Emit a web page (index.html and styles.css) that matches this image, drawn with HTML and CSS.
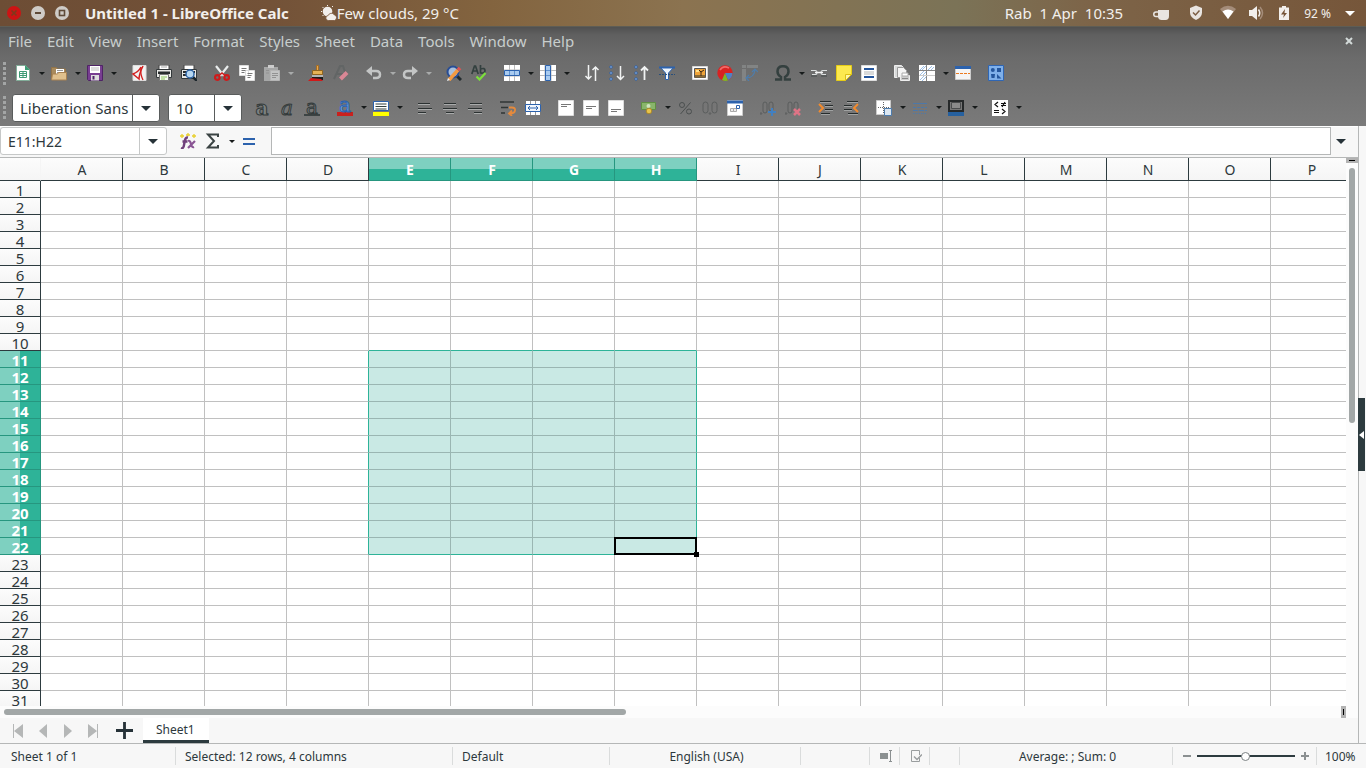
FILE: index.html
```html
<!DOCTYPE html>
<html lang="en">
<head>
  <meta charset="UTF-8" />
  <title>Untitled 1 - LibreOffice Calc</title>
  <link rel="stylesheet" href="styles.css">
</head>
<body>
  <header class="topbar">
    <div class="window-buttons">
      <button class="win-btn close" aria-label="Close"><svg viewBox="0 0 14 14"><path d="M4.5 4.5l5 5M9.5 4.5l-5 5" stroke="#7d3a1c" stroke-width="1.6"/></svg></button>
      <button class="win-btn" aria-label="Minimize"><svg viewBox="0 0 14 14"><path d="M4 7h6" stroke="#5f4a38" stroke-width="2"/></svg></button>
      <button class="win-btn" aria-label="Restore"><svg viewBox="0 0 14 14"><rect x="4.5" y="4.5" width="5" height="5" fill="none" stroke="#5f4a38" stroke-width="1.6"/></svg></button>
    </div>
    <h1 class="title">Untitled 1 - LibreOffice Calc</h1>
    <div class="weather">
      <svg class="icon" viewBox="0 0 16 16" fill="#f2efec"><circle cx="6.500" cy="6.500" r="4.800"/><path d="M6.500 0v1M1.500 2l1 1M11 2l1-1M0 6.500h1M1.500 11l1-1" stroke="#f2efec"/><path d="M7.500 15.500a2.500 2.500 0 0 1-.3-5 3.400 3.400 0 0 1 6-.8 3 3 0 0 1 .3 5.800z" stroke="#775439" stroke-width=".8"/></svg>
      <span>Few clouds, 29 °C</span>
    </div>
    <div class="tray">
      <span class="clock">Rab  1 Apr  10:35</span>
      <svg class="icon tray-cup" viewBox="0 0 16 16" fill="#e9e5e1"><path d="M5 5h11v6q0 4-3.500 4h-4Q5.500 15 5 12z"/><path d="M5.500 7H3a2 2 0 0 0 0 4.500h3" fill="none" stroke="#e9e5e1" stroke-width="1.500"/></svg>
      <svg class="icon tray-shield" viewBox="0 0 16 16" fill="#e9e5e1"><path d="M8 .5l6 2.500v4.500q0 4.500-6 7.500-6-3-6-7.500V3z"/><path d="M5 7.500l2.500 2.500 4-4.500" fill="none" stroke="#7d5f45" stroke-width="1.500"/></svg>
      <svg class="icon" viewBox="0 0 16 16"><path d="M0 4q8-6.500 16 0L8 14z" fill="#a48c79"/><path d="M2.500 6.500q5.500-4 11 0L8 14z" fill="#fff"/></svg>
      <svg class="icon" viewBox="0 0 16 16" fill="#f2efec"><path d="M1 5h3l5-4v14l-5-4H1z"/><path d="M10.500 4.500q2.500 3.500 0 7" fill="none" stroke="#f2efec" stroke-width="1.500"/><path d="M12 2q5 6 0 12" fill="none" stroke="#a48c79" stroke-width="1.500"/></svg>
      <svg class="icon" viewBox="0 0 16 16" fill="#f2efec"><path d="M6 1h4v1.500h3V15H3V2.500h3z"/><path d="M9 4L5 9.500h3L7 13l4-5H8.500z" fill="#765438"/></svg>
      <span class="percent">92 %</span>
      <span class="tray-arrow"></span>
    </div>
  </header>

  <div class="chrome">
    <nav class="menubar">
      <a href="#">File</a>
      <a href="#">Edit</a>
      <a href="#">View</a>
      <a href="#">Insert</a>
      <a href="#">Format</a>
      <a href="#">Styles</a>
      <a href="#">Sheet</a>
      <a href="#">Data</a>
      <a href="#">Tools</a>
      <a href="#">Window</a>
      <a href="#">Help</a>
      <button class="doc-close" aria-label="Close document"><svg viewBox="0 0 8 8"><path d="M1 1l6 6M7 1L1 7" stroke="#d3dad9" stroke-width="2"/></svg></button>
    </nav>

    <!-- Standard toolbar -->
    <div class="toolbar">
      <span class="grip"></span>
      <button class="tool" aria-label="New"><svg viewBox="0 0 16 16"><path d="M1.500.5h9l4 4v11h-13z" fill="#fff" stroke="#82ad99"/><path d="M10 0l5 5h-5z" fill="#3f9b75"/><path d="M4.500 6.500h7v6h-7zM4.500 8.500h7M4.500 10.500h7M8 6.500v6" fill="none" stroke="#3f9b75"/></svg></button>
      <button class="drop" aria-label="New options"></button>
      <button class="tool" aria-label="Open"><svg viewBox="0 0 16 16"><path d="M.5 14V2.500h5l1 1.500h8v10z" fill="#a98a5c" stroke="#927449"/><path d="M5 4h8v6H5z" fill="#fff"/><path d="M6 5.500h6M6 7.500h6" stroke="#999"/><path d="M.5 15l1-6h5l1-1.500h8v7.500z" fill="#e0c08d" stroke="#a98252"/></svg></button>
      <button class="drop" aria-label="Open options"></button>
      <button class="tool" aria-label="Save"><svg viewBox="0 0 16 16"><path d="M.5.5h15v15H1.500l-1-1z" fill="#783e91" stroke="#4f2466"/><path d="M3 1h10v7H3z" fill="#fff"/><path d="M4 3h8M4 5h8" stroke="#bbb"/><path d="M4 10h8v5.500H4z" fill="#ddd"/><path d="M5.500 11h2v3.500h-2z" fill="#4f2466"/></svg></button>
      <button class="drop" aria-label="Save options"></button>
      <span class="sep"></span>
      <button class="tool" aria-label="Export as PDF"><svg viewBox="0 0 16 16"><path d="M2 .5h13v15H2z" fill="#f2f2f2" stroke="#ddd"/><path d="M10 2Q7.500 7 2 9l6 5Q8 9 12 1" fill="none" stroke="#d31f1f" stroke-width="1.500"/><path d="M10 3q-1 6 2 12" fill="none" stroke="#d31f1f" stroke-width="1.300"/></svg></button>
      <button class="tool" aria-label="Print"><svg viewBox="0 0 16 16"><path d="M3 0h10v5H3z" fill="#fff" stroke="#444"/><path d="M.5 4.500h15v8H.5z" fill="#e9e9e6" stroke="#33383a"/><path d="M2 6.500h12v2.500H2z" fill="#272b2c"/><path d="M3.500 9.500h9v6h-9z" fill="#f5faef" stroke="#777"/><path d="M5 12h6M5 14h4" stroke="#8bc45d"/><path d="M5 2h6" stroke="#aaa"/></svg></button>
      <button class="tool" aria-label="Print preview"><svg viewBox="0 0 16 16"><path d="M3 0h10v5H3z" fill="#fff" stroke="#444"/><path d="M.5 4.500h15v9H.5z" fill="#e9e9e6" stroke="#33383a"/><path d="M2 6h12v2H2zM2 9h3v2H2z" fill="#272b2c"/><path d="M12 12l4 4" stroke="#1a252b" stroke-width="2.500"/><circle cx="9" cy="9" r="4" fill="#b7d8f2" stroke="#2e64a5" stroke-width="1.500"/></svg></button>
      <span class="sep"></span>
      <button class="tool" aria-label="Cut"><svg viewBox="0 0 16 16"><path d="M2 1l8 10M14 1L6 11" stroke="#e9ecec" stroke-width="2.200"/><g fill="none" stroke="#cf1b1b" stroke-width="2.200"><circle cx="3.300" cy="12.500" r="2.300"/><circle cx="12.700" cy="12.500" r="2.300"/></g><path d="M5 10.500l3-2.500 3 2.500" fill="none" stroke="#cf1b1b" stroke-width="1.500"/></svg></button>
      <button class="tool" aria-label="Copy"><svg viewBox="0 0 16 16"><path d="M.5.5h9v10h-9zM6.500 5.500h9v10h-9z" fill="#fff" stroke="#ddd"/><path d="M2.500 3.500h5M2.500 5.500h4M2.500 7.500h3M8.500 8.500h5M8.500 10.500h4M8.500 12.500h3" stroke="#777"/></svg></button>
      <button class="tool" aria-label="Paste"><svg viewBox="0 0 16 16"><path d="M0 2h14v14H0z" fill="#a6a7a7"/><path d="M4 0h6v3H4z" fill="#ccc"/><path d="M6.500 5.500h9v10h-9z" fill="#c4c5c5" stroke="#b5b5b5"/><path d="M8 8.500h6M8 10.500h6M8 12.500h4M2 5.500h3M2 8h3" stroke="#929292"/></svg></button>
      <button class="drop off" aria-label="Paste options"></button>
      <span class="sep"></span>
      <button class="tool" aria-label="Clone formatting"><svg viewBox="0 0 16 16"><path d="M8.500.5h2V6h-2z" fill="#e9a94d" stroke="#a56c22"/><path d="M4.500 5.500h10v4h-10z" fill="#e6b256" stroke="#92661f"/><path d="M4 10h11v5H4z" fill="#1c1c1c"/><path d="M4 11h11" stroke="#e8e8e8" stroke-width="1.500"/><path d="M0 16l3-3 10 1 2 2z" fill="#d11919"/></svg></button>
      <button class="tool" aria-label="Clear formatting"><svg viewBox="0 0 16 16"><path d="M1 14L7 1h3l3 9M4 9h6" fill="none" stroke="#626565" stroke-width="2"/><path d="M7.500 14l6.500-6.500" stroke="#d98795" stroke-width="4"/></svg></button>
      <span class="sep"></span>
      <button class="tool" aria-label="Undo"><svg viewBox="0 0 16 16"><path d="M3 6h7q4 0 4 3.500T10 13H7" fill="none" stroke="#c3c5c5" stroke-width="2.500"/><path d="M0 6l6-5v10z" fill="#c3c5c5"/></svg></button>
      <button class="drop off" aria-label="Undo steps"></button>
      <button class="tool" aria-label="Redo"><svg viewBox="0 0 16 16"><path d="M13 6H6Q2 6 2 9.500T6 13h3" fill="none" stroke="#c3c5c5" stroke-width="2.500"/><path d="M16 6l-6-5v10z" fill="#c3c5c5"/></svg></button>
      <button class="drop off" aria-label="Redo steps"></button>
      <span class="sep"></span>
      <button class="tool" aria-label="Find and replace"><svg viewBox="0 0 16 16"><path d="M10 10l5 5" stroke="#222b2e" stroke-width="3"/><circle cx="7" cy="7" r="5.500" fill="#a9bfdc" stroke="#284d95" stroke-width="2"/><path d="M3 15l9-10" stroke="#f39a42" stroke-width="3.500"/><path d="M12 5l2-2" stroke="#e35454" stroke-width="3.500"/><path d="M1 16l1-3 2 2z" fill="#eee"/></svg></button>
      <button class="tool" aria-label="Spelling"><svg viewBox="0 0 16 16"><path d="M.8 9L3.500 1h1L7.200 9M2 6h4" fill="none" stroke="#33403f" stroke-width="1.700"/><path d="M9.500 0v8.500M9.500 4q4.500-1.500 4.500 1.500t-4.500 2.500" fill="none" stroke="#33403f" stroke-width="1.700"/><path d="M5.500 11.500l3 3 6-6.500" fill="none" stroke="#7ce03b" stroke-width="2.200"/></svg></button>
      <span class="sep"></span>
      <button class="tool" aria-label="Row"><svg viewBox="0 0 16 16"><path d="M0 0h16v16H0z" fill="#fff"/><path d="M5.500 0v16M10.500 0v16M0 5h16M0 11h16" stroke="#bbb"/><path d="M.5 5.500h15v5H.5z" fill="#a9cbf0" stroke="#2c62ad"/><path d="M5.500 6v4M10.500 6v4" stroke="#5f92d0"/></svg></button>
      <button class="drop" aria-label="Row options"></button>
      <button class="tool" aria-label="Column"><svg viewBox="0 0 16 16"><path d="M0 0h16v16H0z" fill="#fff"/><path d="M0 5.500h16M0 10.500h16M5 0v16M11 0v16" stroke="#bbb"/><path d="M5.500.5h5v15h-5z" fill="#a9cbf0" stroke="#2c62ad"/><path d="M6 5.500h4M6 10.500h4" stroke="#5f92d0"/></svg></button>
      <button class="drop" aria-label="Column options"></button>
      <span class="sep"></span>
      <button class="tool" aria-label="Sort"><svg viewBox="0 0 16 16" fill="none" stroke="#f1f3f3" stroke-width="1.500"><path d="M4.500 0v14M1.500 11l3 3 3-3M11.500 16V2M8.500 5l3-3 3 3"/></svg></button>
      <button class="tool" aria-label="Sort ascending"><svg viewBox="0 0 16 16"><path d="M11.500 1v13M8 11l3.500 3.500L15 11" fill="none" stroke="#f1f3f3" stroke-width="1.500"/><path d="M1 1h2v2H1zM1 7h2v2H1zM1 13h2v2H1z" fill="#fff" stroke="#2c62ad"/></svg></button>
      <button class="tool" aria-label="Sort descending"><svg viewBox="0 0 16 16"><path d="M10.500 15V2M7 5.500L10.500 2 14 5.500" fill="none" stroke="#f1f3f3" stroke-width="1.800"/><path d="M1 1h2v2H1zM1 7h2v2H1zM1 13h2v2H1z" fill="#fff" stroke="#2c62ad"/></svg></button>
      <button class="tool" aria-label="AutoFilter"><svg viewBox="0 0 16 16"><path d="M1.500 2.500h13L9.500 8v6.500h-3V8z" fill="#edf4fc" stroke="#2c62ad"/><path d="M0 2.500h16" stroke="#2c62ad" stroke-width="2"/><path d="M0 9.500h16" stroke="#264e7c" stroke-dasharray="2 1"/></svg></button>
      <span class="sep"></span>
      <button class="tool" aria-label="Image"><svg viewBox="0 0 16 16"><path d="M.5 1.500h15v13H.5z" fill="#fff" stroke="#d8d8d8"/><path d="M2.500 3.500h11v9h-11z" fill="#efa43a" stroke="#555"/><path d="M3 10h10v2.500H3z" fill="#8a6a35"/><path d="M9 11V7L7 5M9 7l3-2" stroke="#3c2816" fill="none"/><path d="M4 6h3" stroke="#ffe08b" stroke-width="2"/></svg></button>
      <button class="tool" aria-label="Chart"><svg viewBox="0 0 16 16"><circle cx="8" cy="8" r="7.700" fill="#d82222"/><path d="M8 8h7.500A7.500 7.500 0 0 1 11 15z" fill="#4e82c4"/><path d="M8 8l3 7.500q-3 1-6-.5z" fill="#7bb928"/><path d="M3 5q3-5 9-2" fill="none" stroke="#ef6b68" stroke-width="1.500"/></svg></button>
      <button class="tool" aria-label="Pivot table"><svg viewBox="0 0 16 16"><path d="M0 0h4v3H0zM5 0h11v3H5zM0 4h4v12H0z" fill="#828484"/><path d="M4 13q8 0 9-8M10 7l3-3 3 3M7 10l-3 3 3 3" fill="none" stroke="#4e7dac" stroke-width="1.200"/></svg></button>
      <span class="sep"></span>
      <button class="tool" aria-label="Special character"><svg viewBox="0 0 16 16"><path d="M0 14.500h6V12Q2.500 10 2.500 6.500 2.500 1.200 8 1.200t5.500 5.300Q13.500 10 10 12v2.500h6" fill="none" stroke="#34403f" stroke-width="2.500"/></svg></button>
      <button class="drop" aria-label="More characters"></button>
      <button class="tool" aria-label="Hyperlink"><svg viewBox="0 0 16 16" fill="none" stroke="#dce0e0" stroke-width="1.200"><path d="M0 5.500h4.500q1.500 0 1.500 2t-1.500 2H1M16 5.500h-4.500q-1.500 0-1.500 2t1.500 2H15"/><path d="M4 7.500h8" stroke="#f3f3f3" stroke-width="1.500"/><path d="M0 11h6M10 11h6" stroke="#454a4a" stroke-width="1"/></svg></button>
      <button class="tool" aria-label="Comment"><svg viewBox="0 0 16 16"><path d="M.5.5h15v9l-6 6h-9z" fill="#fce94f" stroke="#e5cc17"/><path d="M9.500 15.500v-6h6z" fill="#fff6a8" stroke="#dcc013"/></svg></button>
      <button class="tool" aria-label="Headers and footers"><svg viewBox="0 0 16 16"><path d="M.5.5h15v15H.5z" fill="#fff" stroke="#ddd"/><path d="M3 4h10M3 12h10" stroke="#24559c" stroke-width="2"/><path d="M3 6h10v4H3z" fill="#d9dada"/></svg></button>
      <span class="sep"></span>
      <button class="tool" aria-label="Print area"><svg viewBox="0 0 16 16"><path d="M.5.5h7l3 3v9H.5z" fill="#d9dbdb" stroke="#eee"/><path d="M3.500 2.500h6l3 3v7h-9z" fill="#f4f4f4" stroke="#999"/><path d="M6.500 10.500h9v5h-9z" fill="#ccc" stroke="#eee"/><path d="M8 8h6v3H8z" fill="#fff" stroke="#aaa"/><path d="M8 13.500h6" stroke="#888"/></svg></button>
      <button class="tool" aria-label="Freeze rows and columns"><svg viewBox="0 0 16 16"><path d="M0 0h16v16H0z" fill="#fff"/><path d="M1 5l4-4M3 5l4-4M9 5l4-4M12 5l3-3M1 10l4-4M3 11l4-4M1 15l4-4M3 16l4-4" stroke="#9cc0e8"/><path d="M7.500 0v16M0 5.500h16" stroke="#858585"/><path d="M0 10.500h16" stroke="#ccc"/></svg></button>
      <button class="drop" aria-label="Freeze options"></button>
      <button class="tool" aria-label="Split window"><svg viewBox="0 0 16 16"><path d="M.5 1.500h15v13H.5z" fill="#f5f5f5" stroke="#ccc"/><path d="M0 2.500h16" stroke="#2c62ad" stroke-width="3"/><path d="M1 8.500h14" stroke="#ec7a1f" stroke-dasharray="3 1"/></svg></button>
      <span class="sep"></span>
      <button class="tool" aria-label="Show draw functions"><svg viewBox="0 0 16 16"><path d="M.5.5h15v15H.5z" fill="#7fb0ea" stroke="#2f66b4"/><g fill="#24569d"><circle cx="4.800" cy="5" r="2"/><path d="M9 3h4v4H9zM3 9h4l-.5 4h-3zM9 9l4.500 4.500H9z"/></g></svg></button>
    </div>

    <!-- Formatting toolbar -->
    <div class="toolbar format">
      <span class="grip"></span>
      <div class="combo font-name">
        <select aria-label="Font name"><option>Liberation Sans</option></select>
      </div>
      <div class="combo font-size">
        <select aria-label="Font size"><option>10</option></select>
      </div>
      <button class="tool letter" aria-label="Bold"><b>a</b></button>
      <button class="tool letter" aria-label="Italic"><i>a</i></button>
      <button class="tool letter" aria-label="Underline"><span class="under">a</span></button>
      <span class="sep"></span>
      <button class="tool letter" aria-label="Font color"><span class="color-letter">a</span></button>
      <button class="drop" aria-label="Font colors"></button>
      <button class="tool" aria-label="Background color"><svg viewBox="0 0 16 16"><path d="M.5 1.500h15v9H.5z" fill="#fff" stroke="#2c62ad"/><path d="M2.500 4h11M2.500 6.500h11M2.500 9h11" stroke="#33403f"/><path d="M0 12h16v4H0z" fill="#ff0"/></svg></button>
      <button class="drop" aria-label="Background colors"></button>
      <span class="sep"></span>
      <button class="tool" aria-label="Align left"><svg viewBox="0 0 16 16"><path d="M1 3.500h12M1 8.500h14M1 12.500h8" stroke="#2b3131"/><path d="M1 4.500h12M1 9.500h14M1 13.500h8" stroke="#a9abab"/></svg></button>
      <button class="tool" aria-label="Align center"><svg viewBox="0 0 16 16"><path d="M2 3.500h12M1 8.500h14M4 12.500h8" stroke="#2b3131"/><path d="M2 4.500h12M1 9.500h14M4 13.500h8" stroke="#a9abab"/></svg></button>
      <button class="tool" aria-label="Align right"><svg viewBox="0 0 16 16"><path d="M3 3.500h12M1 8.500h14M7 12.500h8" stroke="#2b3131"/><path d="M3 4.500h12M1 9.500h14M7 13.500h8" stroke="#a9abab"/></svg></button>
      <span class="sep"></span>
      <button class="tool" aria-label="Wrap text"><svg viewBox="0 0 16 16" fill="none"><path d="M0 2h14M1 7.500h7M1 13h4" stroke="#303636" stroke-width="1.500"/><path d="M9 7.500h3q3.500 0 3 3t-5 3M12 10.500l-3 3 3 2.500" stroke="#e58a3c" stroke-width="1.800"/></svg></button>
      <button class="tool" aria-label="Merge cells"><svg viewBox="0 0 16 16"><path d="M1 1h14v14H1z" fill="#fff"/><path d="M5.500 1v14M10.500 1v14" stroke="#999"/><path d="M.5 4.500h15v7H.5z" fill="#f2f7fd" stroke="#2c62ad"/><path d="M3 8h10M5 6L3 8l2 2M11 6l2 2-2 2" fill="none" stroke="#2c62ad"/></svg></button>
      <span class="sep"></span>
      <button class="tool" aria-label="Align top"><svg viewBox="0 0 16 16"><path d="M.5.5h15v15H.5z" fill="#fff" stroke="#ddd"/><path d="M3 4.500h10M3 6.500h6" stroke="#777"/></svg></button>
      <button class="tool" aria-label="Center vertically"><svg viewBox="0 0 16 16"><path d="M.5.5h15v15H.5z" fill="#fff" stroke="#ddd"/><path d="M3 6.500h10M3 8.500h6" stroke="#777"/></svg></button>
      <button class="tool" aria-label="Align bottom"><svg viewBox="0 0 16 16"><path d="M.5.5h15v15H.5z" fill="#fff" stroke="#ddd"/><path d="M3 9.500h10M3 11.500h6" stroke="#777"/></svg></button>
      <span class="sep"></span>
      <button class="tool" aria-label="Currency"><svg viewBox="0 0 16 16"><path d="M.5 2.500h14v7H.5z" fill="#89b56b" stroke="#5f9042"/><circle cx="7.500" cy="6" r="2" fill="#cfe6bf"/><circle cx="8" cy="11" r="2.800" fill="#e7c44c" stroke="#a9872b"/></svg></button>
      <button class="drop" aria-label="Currency formats"></button>
      <button class="tool" aria-label="Percent"><svg viewBox="0 0 16 16" fill="none" stroke="#4b4f4f"><circle cx="5" cy="5" r="2.500"/><circle cx="12" cy="11.500" r="2.500"/><path d="M13.500 2.500L3.500 14"/></svg></button>
      <button class="tool" aria-label="Number"><svg viewBox="0 0 16 16" fill="none" stroke="#5a5d5d"><rect x="1" y="2" width="5" height="11" rx="2.500"/><rect x="10" y="2" width="5" height="11" rx="2.500"/><circle cx="8" cy="13.500" r=".8"/></svg></button>
      <button class="tool" aria-label="Date"><svg viewBox="0 0 16 16"><path d="M.5.5h15v15H.5z" fill="#fff" stroke="#ccc"/><path d="M0 2h16" stroke="#2c62ad" stroke-width="3"/><path d="M3.500 8.500h3v3h-3zM6.500 8.500h3v3h-3z" fill="#eee" stroke="#aaa"/><path d="M9.500 5.500h3v3h-3z" fill="#fff" stroke="#2c62ad"/></svg></button>
      <span class="sep"></span>
      <button class="tool" aria-label="Add decimal place"><svg viewBox="0 0 16 16" fill="none" stroke="#5a5d5d"><rect x="3" y="2" width="4" height="11" rx="2"/><rect x="9" y="2" width="4" height="9" rx="2"/><circle cx="1" cy="13.500" r=".8"/><path d="M8 12h8M12 8v8" stroke="#4180c2" stroke-width="2"/></svg></button>
      <button class="tool" aria-label="Delete decimal place"><svg viewBox="0 0 16 16" fill="none" stroke="#5a5d5d"><rect x="3" y="2" width="4" height="11" rx="2"/><rect x="9" y="2" width="4" height="9" rx="2"/><circle cx="1" cy="13.500" r=".8"/><path d="M9 9l6 6M15 9l-6 6" stroke="#df7486" stroke-width="2.500"/></svg></button>
      <span class="sep"></span>
      <button class="tool" aria-label="Increase indent"><svg viewBox="0 0 16 16" fill="none"><path d="M2 1.500h11M7 5.500h8M7 9.500h8M3 13.500h9" stroke="#262c2c"/><path d="M2 2.500h11M7 6.500h8M7 10.500h8M3 14.500h9" stroke="#a0a2a2"/><path d="M1 4l4 4-4 4" stroke="#f28b2e" stroke-width="2"/></svg></button>
      <button class="tool" aria-label="Decrease indent"><svg viewBox="0 0 16 16" fill="none"><path d="M4 1.500h11M1 5.500h8M1 9.500h8M5 13.500h10" stroke="#262c2c"/><path d="M4 2.500h11M1 6.500h8M1 10.500h8M5 14.500h10" stroke="#a0a2a2"/><path d="M15 4l-4 4 4 4" stroke="#f28b2e" stroke-width="2"/></svg></button>
      <span class="sep"></span>
      <button class="tool" aria-label="Borders"><svg viewBox="0 0 16 16"><path d="M.5.500h14v14H.5z" fill="#fff" stroke="#ccc"/><path d="M7.500 2v12M2 7.500h12" stroke="#666" stroke-dasharray="1 1"/><path d="M8.500 8.500h7v7h-7z" fill="#dce7f1" stroke="#4d7cae"/></svg></button>
      <button class="drop" aria-label="Border types"></button>
      <button class="tool" aria-label="Border style"><svg viewBox="0 0 16 16" stroke="#4d78a8"><path d="M1 3.500h14"/><path d="M1 7.500h14" stroke-dasharray="3 1"/><path d="M1 10.500h14" stroke-dasharray="5 1"/><path d="M1 13.500h14" stroke-dasharray="1 1"/></svg></button>
      <button class="drop" aria-label="Border styles"></button>
      <button class="tool" aria-label="Border color"><svg viewBox="0 0 16 16"><path d="M1 1h14v10H1z" fill="#777" stroke="#26292a" stroke-width="2"/><path d="M3.500 2.500h9v6h-9z" fill="#8a8a8a" stroke="#4a4c4d"/><path d="M0 12h16v4H0z" fill="#25609f"/></svg></button>
      <button class="drop" aria-label="Border colors"></button>
      <span class="sep"></span>
      <button class="tool" aria-label="Conditional formatting"><svg viewBox="0 0 16 16"><path d="M0 0h16v16H0z" fill="#fff"/><path d="M6 2L3 4.500 6 7M9 3.500h5M9 5.500h5M13 2l-3 5M2 10.500h5M2 12.500h5M10 9l3 2.500L10 14" fill="none" stroke="#111" stroke-width="1.200"/></svg></button>
      <button class="drop" aria-label="Conditional options"></button>
    </div>
  </div>

  <div class="workspace">
    <main class="document">
      <div class="formula-bar">
        <div class="name-box">
          <input type="text" aria-label="Name box" value="E11:H22">
          <button class="name-drop" aria-label="Named ranges"></button>
        </div>
        <button class="tool" aria-label="Function wizard"><svg viewBox="0 0 16 16" fill="none"><path d="M1 15q2.500 1 3-3l1-5q.7-3 3-2.500M2.500 8.500h5" stroke="#70407b" stroke-width="2.400"/><path d="M8 8q2-1 3 3t3 3M15 8l-7 7" stroke="#8a5594" stroke-width="2.200"/><path d="M2 1v4M0 3h4M8 0v3M6 2h4M14 1v4M12 3h4" stroke="#e9cf2d" stroke-width="1.300"/></svg></button>
        <button class="tool" aria-label="Sum"><svg viewBox="0 0 16 16"><path d="M13 4V1.500H3L9 8l-6 6.500h10V12" fill="none" stroke="#3a4343" stroke-width="2"/></svg></button>
        <button class="drop" aria-label="Select function"></button>
        <button class="tool" aria-label="Formula"><svg viewBox="0 0 16 16" stroke="#2c62ad" stroke-width="2"><path d="M2 6h12M2 11h12"/></svg></button>
        <input class="formula" type="text" aria-label="Input line">
        <button class="expand" aria-label="Expand formula bar"></button>
      </div>

      <div class="sheet">
        <div class="grid-view">
          <table class="grid">
            <thead><tr id="col-heads"></tr></thead>
            <tbody id="rows"></tbody>
          </table>
        </div>
        <div class="vscroll">
          <span class="splitter"></span>
          <span class="thumb"></span>
        </div>
      </div>

      <div class="hscroll">
        <span class="thumb"></span>
        <span class="splitter"></span>
      </div>

      <div class="tabs">
        <button class="nav" aria-label="First sheet"><svg viewBox="0 0 12 14"><path d="M1 0h1v14H1zM11 0v14L2 7z"/></svg></button>
        <button class="nav" aria-label="Previous sheet"><svg viewBox="0 0 12 14"><path d="M10 0v14L2 7z"/></svg></button>
        <button class="nav" aria-label="Next sheet"><svg viewBox="0 0 12 14"><path d="M2 0v14l8-7z"/></svg></button>
        <button class="nav" aria-label="Last sheet"><svg viewBox="0 0 12 14"><path d="M10 0h1v14h-1zM1 0v14l9-7z"/></svg></button>
        <button class="add-sheet" aria-label="Add sheet"><svg viewBox="0 0 18 18"><path d="M9 0v18M0 9h18" stroke="#263238" stroke-width="3"/></svg></button>
        <button class="tab">Sheet1</button>
      </div>
    </main>

    <aside class="sidebar">
      <button class="sidebar-handle" aria-label="Show sidebar"></button>
    </aside>
  </div>

  <footer class="statusbar">
    <span>Sheet 1 of 1</span>
    <span>Selected: 12 rows, 4 columns</span>
    <span>Default</span>
    <span class="center">English (USA)</span>
    <span></span>
    <span class="center"><svg viewBox="0 0 12 12"><path d="M0 3h8v6H0z" fill="#8b9091"/><path d="M9 .5h3M10.500.5v11M9 11.500h3" fill="none" stroke="#8b9091"/></svg></span>
    <span class="center"><svg viewBox="0 0 12 12"><path d="M9.500 5V.5h-8v11h5" fill="none" stroke="#9a9e9f"/><path d="M4 6.500l3 3 5-5" fill="none" stroke="#9a9e9f" stroke-width="1.500"/><path d="M9.500 8v3.500h-4" fill="none" stroke="#9a9e9f"/></svg></span>
    <span></span>
    <span class="center">Average: ; Sum: 0</span>
    <span class="zoom">
      <button aria-label="Zoom out"><svg viewBox="0 0 8 8"><path d="M0 4h8" stroke="#8b9091" stroke-width="2"/></svg></button>
      <input type="range" aria-label="Zoom" min="0" max="100" value="49">
      <button aria-label="Zoom in"><svg viewBox="0 0 8 8"><path d="M0 4h8M4 0v8" stroke="#8b9091" stroke-width="2"/></svg></button>
    </span>
    <span class="last">100%</span>
  </footer>

  <script src="script.js"></script>
</body>
</html>
```
FILE: styles.css
```css
* {
  box-sizing: border-box;
}

body {
  margin: 0;
  height: 100vh;
  display: flex;
  flex-direction: column;
  overflow: hidden;
  font-family: 'Noto Sans', sans-serif;
  font-size: 15px;
  color: #2d383c;
  background: #f7f7f7;
}

button {
  border: none;
  padding: 0;
  margin: 0;
  background: none;
  font: inherit;
  color: inherit;
}

input, select {
  font: inherit;
  color: inherit;
  margin: 0;
}

svg {
  display: block;
}

/* Desktop panel */
.topbar {
  display: flex;
  align-items: center;
  height: 27px;
  padding: 0 11px 0 7px;
  color: #f2efec;
  background: linear-gradient(90deg, #6d4d35, #735238 20%, #83643f 36%, #8b7350 50%, #7b7357 70%, #7d6448 80%, #76563a);
  border-bottom: 1px solid #5e5d55;
}

.window-buttons {
  display: flex;
  gap: 10px;
}

.win-btn {
  width: 14px;
  height: 14px;
  border-radius: 50%;
  background: #cfcbc7;
}

.win-btn.close {
  background: #cc1414;
}

.title {
  margin: 0 32px 0 16px;
  font-size: 15px;
  font-weight: bold;
}

.weather {
  display: flex;
  align-items: center;
}

.icon {
  width: 16px;
  height: 16px;
}

.tray {
  display: flex;
  align-items: center;
  gap: 12px;
  margin-left: auto;
}

.clock {
  white-space: pre;
  margin-right: 18px;
}

.tray-cup {
  margin-right: 7px;
}

.tray-shield {
  margin-right: 4px;
}

.percent {
  margin-right: 2px;
  font-size: 12px;
}

.tray-arrow {
  border: 5px solid transparent;
  border-top-color: #fff;
  border-bottom: none;
}

/* Menu and toolbars */
.chrome {
  background: linear-gradient(#505050, #606060 8px, #6b6b6b 30px, #7a7a7a);
}

.menubar {
  display: flex;
  align-items: center;
  gap: 15px;
  height: 30px;
  padding: 0 13px 2px 8px;
}

.menubar a {
  color: #c8cecd;
  text-decoration: none;
}

.doc-close {
  width: 8px;
  height: 8px;
  margin-left: auto;
}

.toolbar {
  display: flex;
  align-items: center;
  height: 32px;
  padding-left: 3px;
}

.toolbar.format {
  height: 37px;
}

.grip {
  width: 3px;
  height: 23px;
  margin-right: 5px;
  background: repeating-linear-gradient(#a3a5a5 0 3px, transparent 3px 5px);
}

.tool {
  width: 25px;
  height: 24px;
  padding: 0 5px 0 4px;
}

.tool svg {
  width: 16px;
  height: 16px;
}

.drop {
  display: flex;
  justify-content: center;
  width: 11px;
}

.drop::after {
  content: "";
  border: 3px solid transparent;
  border-top-color: #161a1a;
  border-bottom: none;
}

.drop.off::after {
  border-top-color: #a9abab;
}

.sep {
  width: 8px;
}

/* Outlined letters of the character buttons */
.letter {
  font-family: 'DejaVu Serif', serif;
  font-size: 20px;
  line-height: 20px;
  color: #7c8181;
  -webkit-text-stroke: 1px #343b3b;
}

.under {
  display: block;
  line-height: 14px;
  border-bottom: 2px solid #3d4444;
}

.color-letter {
  display: block;
  line-height: 13px;
  color: #8db3e2;
  -webkit-text-stroke: 1px #2c62ad;
  border-bottom: 4px solid #c9211e;
}

.combo {
  position: relative;
  height: 28px;
  margin-left: 1px;
  background: #fff;
  border: 1px solid #595c5c;
  border-radius: 3px;
}

.combo select {
  width: 100%;
  height: 100%;
  padding: 0 27px 0 7px;
  border: none;
  background: transparent;
  appearance: none;
}

/* Arrow part of the combo box */
.combo::before {
  content: "";
  position: absolute;
  top: 0;
  bottom: 0;
  right: 26px;
  border-left: 1px solid #595c5c;
}

.combo::after {
  content: "";
  position: absolute;
  top: 11px;
  right: 8px;
  border: 5px solid transparent;
  border-top-color: #263238;
  border-bottom: none;
}

.font-name {
  width: 148px;
}

.font-size {
  width: 74px;
  margin-left: 8px;
  margin-right: 8px;
}

/* Document area */
.workspace {
  flex: 1;
  display: flex;
  min-height: 0;
  border-bottom: 1px solid #b5b7b7;
}

.document {
  flex: 1;
  display: flex;
  flex-direction: column;
  min-width: 0;
}

.formula-bar {
  display: flex;
  align-items: center;
  height: 32px;
  padding-bottom: 2px;
  border-top: 1px solid #fff;
  border-bottom: 1px solid #b5b7b7;
}

.name-box {
  display: flex;
  width: 167px;
  height: 28px;
  margin-right: 9px;
  background: #fff;
  border: 1px solid #c6c8c8;
  border-radius: 3px;
}

.name-box input {
  flex: 1;
  min-width: 0;
  padding: 0 7px;
  border: none;
  border-right: 1px solid #c6c8c8;
  background: transparent;
  font-size: 14px;
}

.name-drop {
  display: flex;
  align-items: center;
  justify-content: center;
  width: 26px;
}

.name-drop::after, .expand::after {
  content: "";
  border: 5px solid transparent;
  border-top-color: #263238;
  border-bottom: none;
}

.formula {
  flex: 1;
  height: 28px;
  margin-left: 9px;
  background: #fff;
  border: 1px solid #b5b7b7;
}

.expand {
  display: flex;
  justify-content: center;
  width: 20px;
  margin-right: 7px;
}

.sheet {
  flex: 1;
  display: flex;
  min-height: 0;
}

.grid-view {
  flex: 1;
  overflow: hidden;
  background: #fff;
}

.grid {
  width: 1353px;
  table-layout: fixed;
  border-collapse: separate;
  border-spacing: 0;
}

.grid th, .grid td {
  width: 82px;
  height: 17px;
  padding: 0;
  border-right: 1px solid #c0c0c0;
  border-bottom: 1px solid #c0c0c0;
}

.grid th {
  font-size: 15px;
  font-weight: normal;
  line-height: 16px;
  border-color: #2d3b3f;
  background: linear-gradient(#fcfcfc, #f5f5f5);
}

.grid thead th {
  height: 23px;
  padding: 2px 0 0 1px;
  font-size: 14px;
  line-height: 20px;
}

.grid th.corner {
  width: 41px;
  border-right-color: #f5f5f5;
}

.grid tbody th {
  line-height: 14px;
  padding-top: 2px;
}

.grid th.picked {
  color: #fff;
  font-weight: bold;
  border-color: #26967f;
  background: linear-gradient(#7ed0c0 50%, #2eb398 50%);
}

.grid tbody th.picked {
  background: linear-gradient(90deg, #7ed0c0 50%, #2eb398 50%);
}

.grid td.picked {
  background: #c9e9e4;
  border-color: #9ab6b2;
}

.grid td.edge-right {
  border-right-color: #2eb398;
}

.grid td.edge-bottom {
  border-bottom-color: #2eb398;
}

.grid td.cursor {
  position: relative;
}

.cursor::before {
  content: "";
  position: absolute;
  inset: -1px;
  border: 2px solid #000;
}

.cursor::after {
  content: "";
  position: absolute;
  right: -3px;
  bottom: -3px;
  width: 5px;
  height: 5px;
  background: #000;
}

.vscroll {
  width: 12px;
  background: #fcfcfc;
}

.vscroll .splitter {
  display: block;
  height: 5px;
  border: 2px solid #b2b2b2;
  border-width: 2px 3px;
  background: #000;
}

.vscroll .thumb {
  display: block;
  width: 6px;
  height: 255px;
  margin: 5px auto 0;
  border-radius: 3px;
  background: #a2a7a7;
}

.hscroll {
  display: grid;
  grid-template-columns: 622fr 715fr 5px;
  align-items: center;
  height: 12px;
  padding: 0 12px 0 4px;
  background: #fcfcfc;
}

.hscroll .thumb {
  height: 6px;
  border-radius: 3px;
  background: #a2a7a7;
}

.hscroll .splitter {
  grid-column: 3;
  height: 12px;
  border: 2px solid #b2b2b2;
  border-width: 3px 2px;
  background: #000;
}

.tabs {
  display: flex;
  align-items: center;
  height: 25px;
  padding-left: 12px;
  font-size: 12px;
}

.nav {
  width: 12px;
  height: 14px;
  margin-right: 13px;
}

.nav svg {
  fill: #b5b7b7;
}

.add-sheet {
  width: 17px;
  height: 17px;
  margin: 0 10px 0 4px;
}

.tab {
  align-self: stretch;
  padding: 0 14px 0 13px;
  background: #fff;
  border-bottom: 3px solid #2d3b3f;
}

.sidebar {
  display: flex;
  align-items: center;
  width: 8px;
  border-left: 1px solid #b5b7b7;
}

.sidebar-handle {
  display: flex;
  align-items: center;
  width: 7px;
  height: 73px;
  margin-left: -1px;
  background: #2d3b3f;
}

.sidebar-handle::after {
  content: "";
  margin-left: 1px;
  border: 4px solid transparent;
  border-right: 5px solid #fff;
  border-left: none;
}

/* Status bar */
.statusbar {
  display: grid;
  grid-template-columns: 176px 277fr 157fr 191fr 69px 30px 30px 30px 213fr 144px 49px;
  align-items: center;
  height: 24px;
  font-size: 12px;
}

.statusbar > span {
  display: flex;
  align-items: center;
  height: 18px;
  padding: 0 9px;
  border-right: 1px solid #dadcdc;
}

.statusbar > span:first-child {
  padding-left: 11px;
}

.statusbar > .center {
  justify-content: center;
  padding: 0 6px 0 9px;
}

.statusbar > .last {
  padding: 0 8px;
  border-right: none;
}

.statusbar svg {
  width: 12px;
  height: 12px;
}

.statusbar > .zoom {
  padding: 0 7px 0 10px;
}

.zoom button svg {
  width: 8px;
  height: 8px;
}

.zoom input {
  flex: 1;
  min-width: 0;
  height: 10px;
  margin: 0 6px;
  appearance: none;
  background: linear-gradient(#2d3b3f, #2d3b3f) center / 100% 2px no-repeat;
}

.zoom input::-webkit-slider-thumb {
  appearance: none;
  width: 9px;
  height: 9px;
  border: 1px solid #7c8283;
  border-radius: 50%;
  background: #fff;
}
```
FILE: script.js
```js
const columns = 'ABCDEFGHIJKLMNOP'.split('');
const rowCount = 31;
const selection = { left: 4, right: 7, top: 11, bottom: 22 };

const head = document.getElementById('col-heads');
const body = document.getElementById('rows');

const colPicked = c => c >= selection.left && c <= selection.right;
const rowPicked = r => r >= selection.top && r <= selection.bottom;

head.innerHTML = '<th class="corner"></th>' + columns.map((name, c) =>
  `<th class="${colPicked(c) ? 'picked' : ''}">${name}</th>`
).join('');

function cellClass(r, c) {
  const classes = [];
  if (rowPicked(r) && colPicked(c)) classes.push('picked');
  if (rowPicked(r) && (c === selection.left - 1 || c === selection.right)) classes.push('edge-right');
  if (colPicked(c) && (r === selection.top - 1 || r === selection.bottom)) classes.push('edge-bottom');
  if (r === selection.bottom && c === selection.right) classes.push('cursor');
  return classes.join(' ');
}

for (let r = 1; r <= rowCount; r++) {
  const tr = document.createElement('tr');
  tr.innerHTML = `<th class="${rowPicked(r) ? 'picked' : ''}">${r}</th>` +
    columns.map((name, c) => `<td class="${cellClass(r, c)}"></td>`).join('');
  body.appendChild(tr);
}
```
